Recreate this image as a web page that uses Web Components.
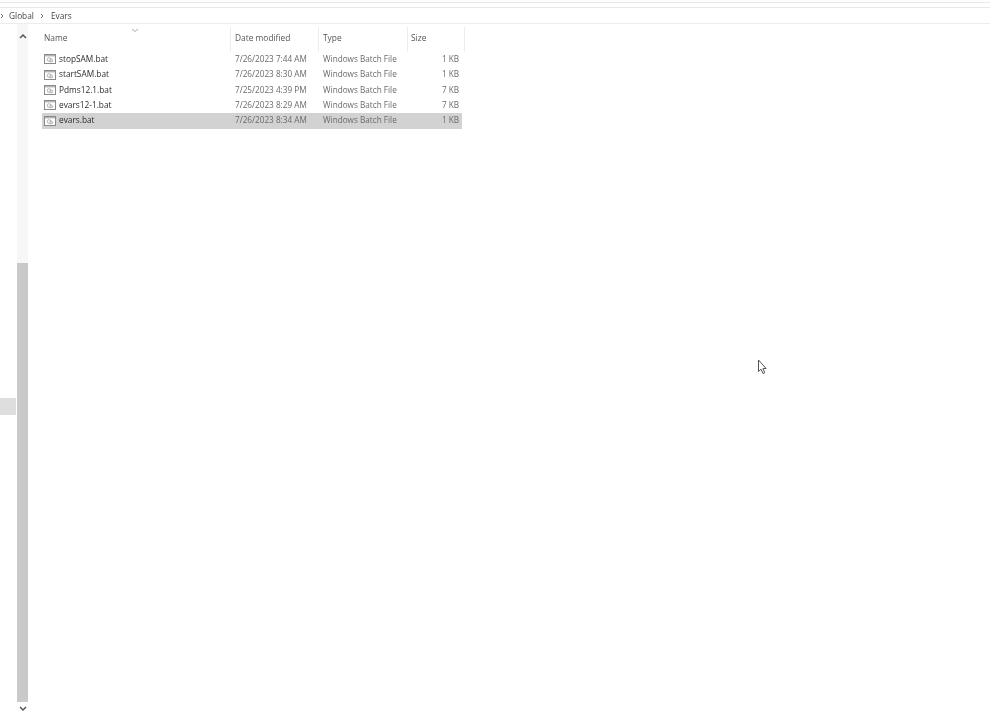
<!DOCTYPE html>
<html><head><meta charset="utf-8"><style>
html,body{margin:0;height:100%;background:#fff;overflow:hidden}
body{font:8.5px "Open Sans","Noto Sans",sans-serif;color:#333}
</style></head><body>
<x-explorer>
  <x-crumbs slot="top"><span>Global</span><span>Evars</span></x-crumbs>
  <x-list slot="main">
    <x-row name="stopSAM.bat" date="7/26/2023 7:44 AM" size="1 KB"></x-row>
    <x-row name="startSAM.bat" date="7/26/2023 8:30 AM" size="1 KB"></x-row>
    <x-row name="Pdms12.1.bat" date="7/25/2023 4:39 PM" size="7 KB"></x-row>
    <x-row name="evars12-1.bat" date="7/26/2023 8:29 AM" size="7 KB"></x-row>
    <x-row name="evars.bat" date="7/26/2023 8:34 AM" size="1 KB" selected></x-row>
  </x-list>
</x-explorer>
<script>
function shadow(el,html){el.attachShadow({mode:'open'}).innerHTML=html;}
const COLS='grid-template-columns:189px 88px 89px 57px;';
customElements.define('x-explorer',class extends HTMLElement{constructor(){super();shadow(this,`<style>
:host{display:flex;flex-direction:column;height:720px;width:990px;position:relative;filter:blur(.3px)}
.t1{height:2px;flex:none}.l{height:1px;background:#e8e8e8;flex:none}.gap{height:4px;flex:none}
.l2{height:1px;background:#ececec;flex:none}
.body{flex:1;display:flex;min-height:0}
.nav{width:17px;flex:none;display:flex;flex-direction:column}
.nav i{display:block;height:17px;width:16px;margin-top:374px;background:#dedede}
.bar{width:11px;flex:none;background:#f7f7f7;display:flex;flex-direction:column;align-items:center;height:692px}
.cap{height:23px;flex:none;display:flex;align-items:center;justify-content:center;width:100%}
.cap.b{height:14px;background:#fff}
.pad{height:216px;flex:none}
.thumb{flex:1;width:100%;background:#c9c9c9}
.main{flex:1;padding:0 0 0 14px;min-width:0}
.cur{position:absolute;left:757px;top:359px}
</style>
<div class="t1"></div><div class="l"></div><div class="gap"></div><div class="l"></div>
<slot name="top"></slot><div class="l2"></div>
<div class="body">
 <div class="nav"><i></i></div>
 <div class="bar">
  <div class="cap"><svg width="8" height="6" viewBox="0 0 8 6"><path d="M1 5L4 2L7 5" fill="none" stroke="#555" stroke-width="1.5"/></svg></div>
  <div class="pad"></div><div class="thumb"></div>
  <div class="cap b"><svg width="8" height="6" viewBox="0 0 8 6"><path d="M1 1L4 4L7 1" fill="none" stroke="#555" stroke-width="1.5"/></svg></div>
 </div>
 <div class="main"><slot name="main"></slot></div>
</div>
<svg class="cur" width="11" height="16" viewBox="0 0 11 16"><path d="M1.5 1V12.5L4 10.2L6 14.5L7.8 13.7L5.9 9.6H9.2Z" fill="#fff" stroke="#555" stroke-width="1"/></svg>`);}});
customElements.define('x-crumbs',class extends HTMLElement{constructor(){super();shadow(this,`<style>
:host{display:flex;align-items:center;height:15px;flex:none;color:#444;font-size:8.3px}
.f{width:9px;flex:none;display:flex;align-items:center}
::slotted(span){white-space:nowrap}
</style><span class="f"><svg width="4" height="6" viewBox="0 0 4 6"><path d="M1 1L3 3L1 5" fill="none" stroke="#777"/></svg></span><slot></slot>`);
const sp=this.querySelectorAll('span');const sep=document.createElement('span');sep.setAttribute('style','display:inline-flex;width:17px;justify-content:center');sep.innerHTML='<svg width="4" height="6" viewBox="0 0 4 6"><path d="M1 1L3 3L1 5" fill="none" stroke="#777"/></svg>';this.insertBefore(sep,sp[1]);}});
customElements.define('x-list',class extends HTMLElement{constructor(){super();shadow(this,`<style>
:host{display:block;position:relative;color:#333}
.head{display:grid;${COLS}width:423px;height:28px;color:#555;box-sizing:border-box}
.head span{height:25px;line-height:22px;padding-left:4px;border-right:1px solid #ececec;margin-top:3px;box-sizing:border-box;white-space:nowrap;font-size:8.4px}
.head span:first-child{padding-left:2px}
.head span:last-child{padding-left:3px}
.sort{position:absolute;left:89px;top:4px}
</style><div class="head"><span>Name</span><span>Date modified</span><span>Type</span><span>Size</span></div>
<svg class="sort" width="8" height="5" viewBox="0 0 8 5"><path d="M1 1L4 3.5L7 1" fill="none" stroke="#aaa"/></svg>
<slot></slot>`);}});
customElements.define('x-row',class extends HTMLElement{constructor(){super();const a=n=>this.getAttribute(n)||'';shadow(this,`<style>
:host{display:block;height:15.35px;width:420px}
.r{display:grid;grid-template-columns:189px 88px 87px 56px;height:15.35px;box-sizing:border-box;padding-bottom:1px;align-items:center;color:#6a6a6a;white-space:nowrap;line-height:14.35px;font-size:8.2px}
:host([selected]) .r{background:#d2d2d2}
.n{display:flex;align-items:center;gap:3px;color:#2b2b2b;padding-left:2px;font-size:8.3px}
.d,.t{padding-left:4px}.s{text-align:right;padding-right:3px}
svg{flex:none;display:block}
</style><div class="r"><div class="n"><svg width="12" height="10" viewBox="0 0 12 10"><rect x=".5" y=".5" width="11" height="9" fill="#fff" stroke="#8a8a8a"/><rect x="1" y="1" width="10" height="1.4" fill="#b5b5b5"/><circle cx="5" cy="5.5" r="1.8" fill="none" stroke="#a0a0a0" stroke-width=".8"/><circle cx="7.2" cy="6.5" r="1.5" fill="#ddd" stroke="#a0a0a0" stroke-width=".7"/></svg><span>${a('name')}</span></div><div class="d">${a('date')}</div><div class="t">Windows Batch File</div><div class="s">${a('size')}</div></div>`);}});
</script>
</body></html>
